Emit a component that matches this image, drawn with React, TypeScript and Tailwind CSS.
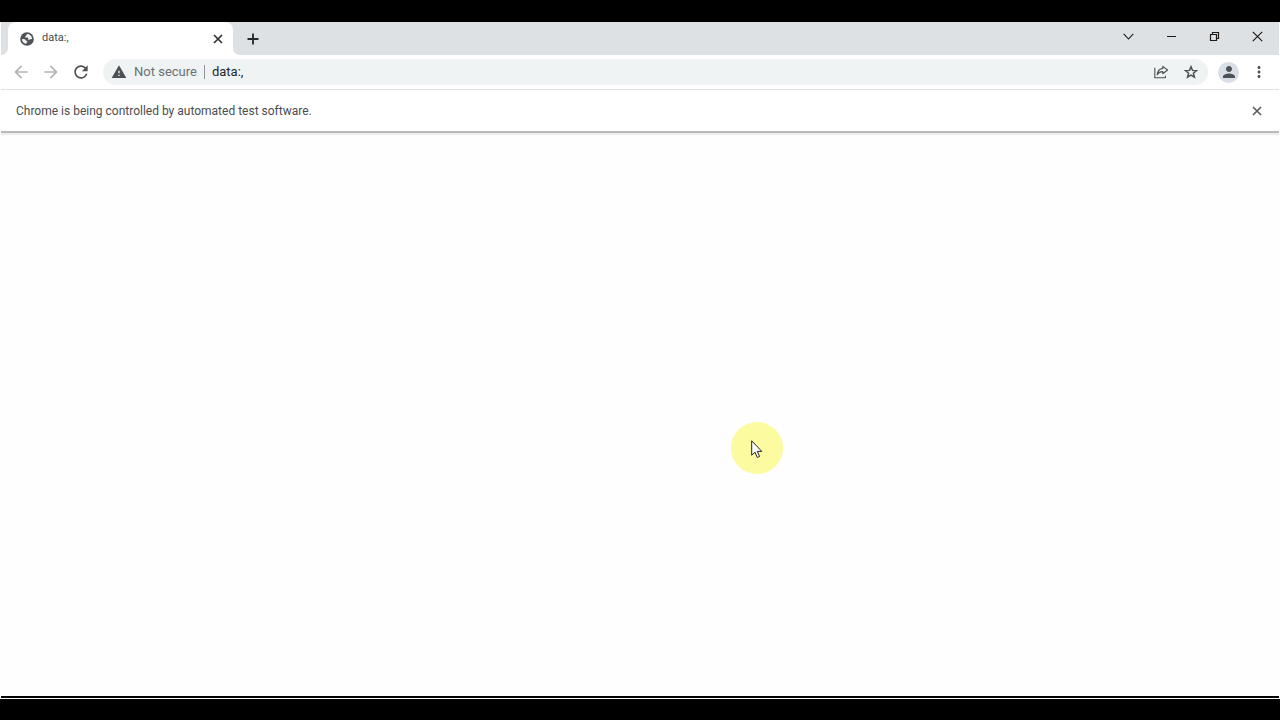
import React, { useState } from 'react';
import {
  MdArrowBack,
  MdArrowForward,
  MdMoreVert,
  MdPerson,
  MdRefresh,
  MdWarning,
} from 'react-icons/md';

const GlobeIcon: React.FC = () => (
  <svg width="14" height="14" viewBox="0 0 14 14">
    <circle cx="7" cy="7" r="6.8" fill="#4f5357" />
    <path
      d="M8 2c-1 0-1.7.5-1.6 1.2.1.8-1.3.7-1.3 1.5 0 .8.9.9 1.8.9 1.1 0 1.3.7 1.2 1.3-.1.7.6.9 1.3.9.9 0 1.2-.7 1.8-.7.3 0 .6.1.8.3A5.3 5.3 0 0 0 8 2z"
      fill="#f4f4f4"
    />
    <path
      d="M2 7c1.3-.2 2.6 0 3.3.4.8.5.5 1.3 1.4 1.5.8.2 1 .7.7 1.2-.4.5-1.1.5-1.1 1v.8A5 5 0 0 1 2 7z"
      fill="#f4f4f4"
    />
  </svg>
);

const CloseIcon: React.FC = () => (
  <svg width="16" height="16" viewBox="0 0 16 16" fill="none" stroke="currentColor" strokeWidth="1.7">
    <path d="m4 4 8 8M12 4l-8 8" />
  </svg>
);

const PlusIcon: React.FC = () => (
  <svg width="20" height="20" viewBox="0 0 20 20" fill="none" stroke="currentColor" strokeWidth="1.8">
    <path d="M10 4.500v11M4.500 10h11" />
  </svg>
);

const StarIcon: React.FC = () => (
  <svg width="16" height="16" viewBox="0 0 16 16" fill="none" stroke="currentColor" strokeWidth="1.5">
    <path d="m8 2.700 1.500 3.700 4 .3-3.100 2.600 1 3.900L8 11.100l-3.400 2.100 1-3.900-3.100-2.600 4-.3z" />
  </svg>
);

const ShareIcon: React.FC = () => (
  <svg width="16" height="16" viewBox="0 0 16 16" fill="none" stroke="currentColor" strokeWidth="1.1" strokeLinejoin="round">
    <path d="M1.8 3.8v9.9h10.6v-2" />
    <path d="M9.8 2.4 14.6 6 9.8 9.7V7.6C7 7.5 5.4 8.6 4.2 10.7 4.6 7 6.5 4.8 9.8 4.4z" />
  </svg>
);

const WindowControls: React.FC = () => (
  <div className="flex h-7 text-[#1b1b1b]">
    <button type="button" aria-label="Search tabs" className="flex w-[43px] items-center justify-center">
      <svg width="11" height="11" viewBox="0 0 11 11" fill="none" stroke="currentColor" strokeWidth="1.1">
        <path d="M.7 2.8 5.5 8l4.8-5.2" />
      </svg>
    </button>
    <button type="button" aria-label="Minimize" className="flex w-[43px] items-center justify-center">
      <svg width="11" height="11" viewBox="0 0 11 11" fill="none" stroke="currentColor">
        <path d="M1 5.5h9" />
      </svg>
    </button>
    <button type="button" aria-label="Restore" className="flex w-[43px] items-center justify-center">
      <svg width="11" height="11" viewBox="0 0 11 11" fill="none" stroke="currentColor" strokeWidth="1.2">
        <path d="M1.5 3.5h6v6h-6zM3.5 3.3V1.5h6v6H7.7" />
      </svg>
    </button>
    <button type="button" aria-label="Close window" className="flex w-[43px] items-center justify-center">
      <svg width="11" height="11" viewBox="0 0 11 11" fill="none" stroke="currentColor" strokeWidth="1.2">
        <path d="m.8.8 9.4 9.4M10.2.8.8 10.2" />
      </svg>
    </button>
  </div>
);

const TabStrip: React.FC = () => (
  <div className="flex h-[33px] items-start bg-[#dee1e4]">
    {/* The two curved feet join the tab to the toolbar */}
    <div className="flex w-[7px] items-end self-stretch">
      <svg width="7" height="7" viewBox="0 0 7 7" fill="#fff">
        <path d="M7 0v7H0a7 7 0 0 0 7-7z" />
      </svg>
    </div>
    <div className="flex h-full w-[225px] items-center rounded-t-lg bg-white pl-3 pr-[7px]">
      <GlobeIcon />
      <span className="ml-2 flex-1 text-[11px] text-[#45494d]">data:,</span>
      <button type="button" aria-label="Close tab" className="text-[#2f3337]">
        <CloseIcon />
      </button>
    </div>
    <div className="flex w-[7px] items-end self-stretch">
      <svg width="7" height="7" viewBox="0 0 7 7" fill="#fff">
        <path d="M0 0v7h7a7 7 0 0 1-7-7z" />
      </svg>
    </div>
    <button type="button" aria-label="New tab" className="ml-[3px] flex h-full items-center text-[#25282b]">
      <PlusIcon />
    </button>
    <div className="flex-1" />
    <WindowControls />
  </div>
);

const Toolbar: React.FC = () => {
  const [address, setAddress] = useState('data:,');

  return (
    <div className="flex h-[35px] items-center border-b border-[#dfe1e3] bg-white px-[5px] text-[#4d5156]">
      <button type="button" aria-label="Back" className="flex w-[30px] justify-center text-[#b3b5b8]">
        <MdArrowBack className="h-5 w-5" />
      </button>
      <button type="button" aria-label="Forward" className="flex w-[30px] justify-center text-[#b3b5b8]">
        <MdArrowForward className="h-5 w-5" />
      </button>
      <button type="button" aria-label="Reload" className="flex w-[30px] justify-center">
        <MdRefresh className="h-5 w-5" />
      </button>
      <div className="ml-[7px] flex h-[26px] flex-1 items-center rounded-full bg-[#f0f3f3] pl-2 pr-[9px] text-[13px]">
        <button type="button" className="flex items-center gap-[7px] text-[#6b6f74]">
          <MdWarning className="h-4 w-4 text-[#4d5156]" />
          Not secure
        </button>
        <div className="mx-[7px] h-[14px] w-px bg-[#909498]" />
        <input
          type="text"
          aria-label="Address"
          className="min-w-0 flex-1 bg-transparent text-[#25282b] outline-none"
          value={address}
          onChange={e => setAddress(e.target.value)}
        />
        <button type="button" aria-label="Share this page" className="mr-[14px]">
          <ShareIcon />
        </button>
        <button type="button" aria-label="Bookmark this tab">
          <StarIcon />
        </button>
      </div>
      <button
        type="button"
        aria-label="Profile"
        className="ml-[10px] flex h-[21px] w-[21px] items-center justify-center rounded-full bg-[#dadee6]"
      >
        <MdPerson className="h-[18px] w-[18px]" />
      </button>
      <button type="button" aria-label="Menu" className="ml-[5px] flex w-[30px] justify-center">
        <MdMoreVert className="h-[18px] w-[18px]" />
      </button>
    </div>
  );
};

const InfoBar: React.FC = () => (
  <div className="flex h-[41px] items-center justify-between bg-white pl-[15px] pr-[14px]">
    <p className="text-[12px] text-[#4a4d50]">Chrome is being controlled by automated test software.</p>
    <button type="button" aria-label="Dismiss" className="text-[#5a5d60]">
      <CloseIcon />
    </button>
  </div>
);

const App: React.FC = () => {
  return (
    <div className="flex min-h-screen flex-col bg-black pb-[21px] pt-[22px] font-['Roboto','Open_Sans',sans-serif]">
      <div className="flex flex-1 flex-col bg-white px-px">
        <TabStrip />
        <Toolbar />
        <InfoBar />
        <main className="relative flex-1 border-t-2 border-[#b9b9b9] bg-[#fefefe] shadow-[inset_0_2px_1px_#ececec]">
          {/* Pointer with its click highlight */}
          <div className="absolute left-[57.1%] top-[51.4%] h-[52px] w-[52px] rounded-full bg-[#fdfb9f]">
            <svg className="absolute left-5 top-[18px]" width="12" height="19" viewBox="0 0 12 19">
              <path
                d="M.7.8v14.4l3.3-3 2.3 5.3 2.3-1-2.3-5.1h4.5z"
                fill="#fff"
                stroke="#222"
                strokeWidth="1"
              />
            </svg>
          </div>
        </main>
        <div className="mb-px h-[2px] bg-black" />
      </div>
    </div>
  );
};

export default App;
